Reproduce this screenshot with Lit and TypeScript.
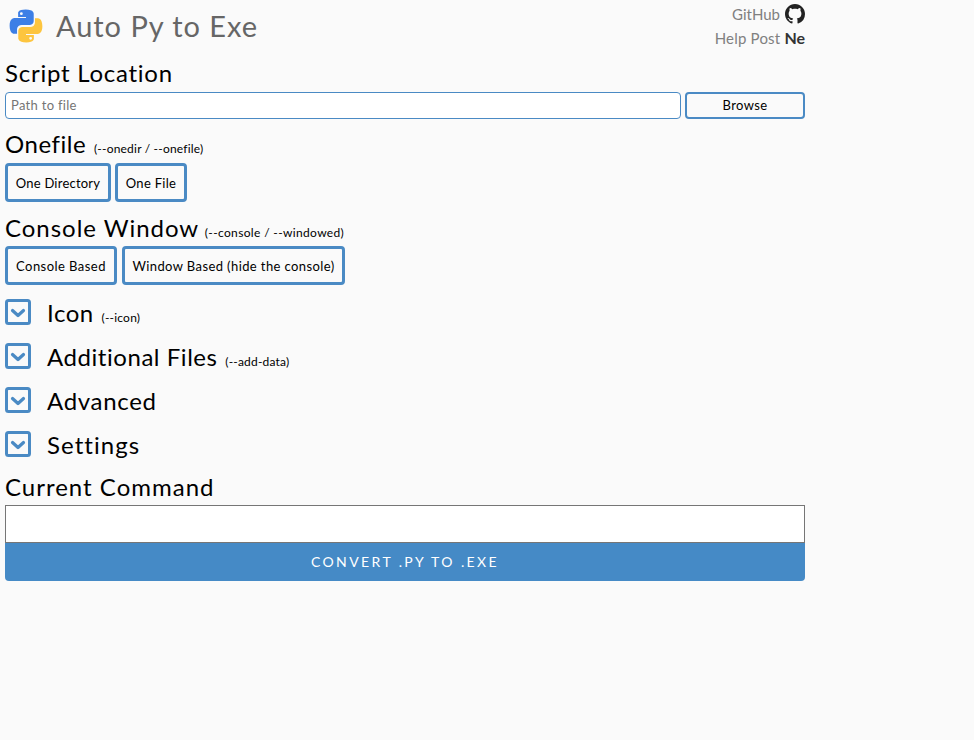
import { LitElement, html, css } from "lit";
import { customElement } from "lit/decorators.js";

const chevronBox = html`<svg class="chev" viewBox="0 0 26 26" aria-hidden="true">
  <rect x="1.500" y="1.500" width="23" height="23" rx="2" fill="none" stroke="#4a8ac4" stroke-width="3"></rect>
  <path d="M7.500 11.500 L13 16.500 L18.500 11.500" fill="none" stroke="#4a8ac4" stroke-width="3.200" stroke-linecap="round" stroke-linejoin="round"></path>
</svg>`;

@customElement("app-root")
export class AppRoot extends LitElement {
  static styles = css`
    :host {
      display: block;
      min-height: 740px;
      background: #fafafa;
      font-family: "Lato", "Open Sans", sans-serif;
      color: #000;
      box-sizing: border-box;
      padding: 0 0 0 5px;
    }
    .page { width: 800px; display: flex; flex-direction: column; }
    header { display: flex; justify-content: space-between; height: 52px; }
    .brand { display: flex; align-items: center; gap: 13px; padding: 0 0 0 4px; height: 52px; }
    .logo { width: 34px; height: 34px; }
    h1 { margin: 0; font-size: 29px; font-weight: 400; color: #666; letter-spacing: 0.95px; line-height: 52px; }
    .links { display: flex; flex-direction: column; align-items: flex-end; font-size: 15px; color: #808080; }
    .link { display: flex; align-items: center; height: 21px; gap: 4px; letter-spacing: 0.2px; }
    .link.gh { height: 27px; letter-spacing: 0; gap: 5px; }
    .gh-icon { width: 20px; height: 20px; }
    .ne { font-weight: 700; color: #333; font-size: 16px; letter-spacing: 0; }
    h2 { margin: 0; font-size: 24px; font-weight: 400; letter-spacing: 0.55px; line-height: 32px; }
    h2 small { font-size: 12px; letter-spacing: 0.2px; margin-left: 1px; line-height: 1; }
    .script { margin-top: 5px; letter-spacing: 0.75px; }
    .row { display: flex; gap: 4px; margin-top: 3px; }
    .path {
      flex: 1; height: 27px; box-sizing: border-box; border: 1px solid #4a8ac4; border-radius: 4px;
      background: #fff; padding: 0 5px 2px; font: inherit; font-size: 13px; letter-spacing: 0.3px; color: #757575; display: flex; align-items: center;
    }
    .browse {
      width: 120px; height: 27px; box-sizing: border-box; border: 2px solid #4a8ac4; border-radius: 4px;
      background: #fafafa; font: inherit; font-size: 13px; letter-spacing: 0.4px; padding: 0 0 2px; color: #000;
    }
    .section { margin-top: 8px; }
    .section + .section { margin-top: 9px; }
    .section h2.tight { line-height: 34px; }
    .choices { display: flex; gap: 4px; margin-top: 2px; }
    .choices.wide { gap: 5px; margin-top: 1px; }
    .choice {
      height: 39px; box-sizing: border-box; border: 3px solid #4a8ac4; border-radius: 4px; background: #fafafa;
      font: inherit; font-size: 13px; letter-spacing: 0.3px; padding: 0; color: #000;
    }
    .w-dir { width: 106px; letter-spacing: 0.22px; }
    .w-file { width: 72px; }
    .w-con { width: 112px; letter-spacing: 0.45px; }
    .w-win { width: 223px; letter-spacing: 0.4px; }
    .wide-title { letter-spacing: 0.97px; }
    .wide-title small { letter-spacing: 0.35px; margin-left: -1px; }
    .collapsibles { display: flex; flex-direction: column; gap: 18px; margin-top: 14px; }
    .col { display: flex; align-items: center; height: 26px; gap: 16px; }
    .chev { width: 26px; height: 26px; flex: none; }
    .col h2 { line-height: 26px; padding-top: 2px; }
    .col h2.adv { letter-spacing: 0.67px; }
    .col h2.set { letter-spacing: 1.05px; }
    .cmd-title { margin-top: 14px; line-height: 32px; letter-spacing: 1px; }
    .cmd { height: 38px; box-sizing: border-box; border: 1px solid #767676; background: #fff; margin-top: 2px; }
    .convert {
      height: 38px; border: 0; border-radius: 0 0 4px 4px; background: #458ac6; color: #fff;
      font: inherit; font-size: 14px; letter-spacing: 2.4px; padding: 0 0 2px;
    }
  `;

  render() {
    return html`<div class="page">
      <header>
        <div class="brand">
          <svg class="logo" viewBox="0 0 110 110" aria-hidden="true">
            <path fill="#3d7fe6" d="M54 2C28 2 29.500 13.500 29.500 13.500V25.500H55V29H19C19 29 2 27 2 54C2 81 17 80 17 80H26V67C26 67 25.500 52 41 52H66C66 52 80 52 80 38V16C80 16 82 2 54 2ZM40 10.500A4.600 4.600 0 1 1 40 19.700A4.600 4.600 0 0 1 40 10.500Z"></path>
            <path fill="#fdc53f" d="M56 108C82 108 80.500 96.500 80.500 96.500V84.500H55V81H91C91 81 108 83 108 56C108 29 93 30 93 30H84V43C84 43 84.500 58 69 58H44C44 58 30 58 30 72V94C30 94 28 108 56 108ZM70 99.500A4.600 4.600 0 1 1 70 90.300A4.600 4.600 0 0 1 70 99.500Z"></path>
          </svg>
          <h1>Auto Py to Exe</h1>
        </div>
        <div class="links">
          <div class="link gh">GitHub
            <svg class="gh-icon" viewBox="0 0 16 16" aria-hidden="true"><path fill="#222" d="M8 0C3.580 0 0 3.580 0 8c0 3.540 2.290 6.530 5.470 7.590.4.070.55-.17.55-.38 0-.19-.01-.82-.01-1.490-2.010.37-2.530-.49-2.690-.94-.09-.23-.48-.94-.82-1.130-.28-.15-.68-.52-.01-.53.63-.01 1.080.58 1.230.82.720 1.210 1.870.87 2.330.66.070-.52.280-.87.510-1.070-1.780-.2-3.640-.89-3.640-3.950 0-.87.310-1.590.82-2.150-.08-.2-.36-1.020.08-2.120 0 0 .67-.21 2.200.82.640-.18 1.320-.27 2-.27s1.360.09 2 .27c1.530-1.040 2.200-.82 2.200-.82.440 1.100.16 1.920.08 2.120.51.560.82 1.270.82 2.150 0 3.070-1.870 3.750-3.650 3.950.29.250.54.730.54 1.480 0 1.070-.01 1.930-.01 2.200 0 .21.150.46.550.38A8.010 8.010 0 0 0 16 8c0-4.420-3.580-8-8-8z"></path></svg>
          </div>
          <div class="link">Help Post <span class="ne">Ne</span></div>
        </div>
      </header>

      <h2 class="script">Script Location</h2>
      <div class="row">
        <div class="path">Path to file</div>
        <button class="browse">Browse</button>
      </div>

      <div class="section">
        <h2 class="tight">Onefile <small>(--onedir / --onefile)</small></h2>
        <div class="choices">
          <button class="choice w-dir">One Directory</button>
          <button class="choice w-file">One File</button>
        </div>
      </div>
      <div class="section">
        <h2 class="tight wide-title">Console Window <small>(--console / --windowed)</small></h2>
        <div class="choices wide">
          <button class="choice w-con">Console Based</button>
          <button class="choice w-win">Window Based (hide the console)</button>
        </div>
      </div>

      <div class="collapsibles">
        <div class="col">${chevronBox}<h2>Icon <small>(--icon)</small></h2></div>
        <div class="col">${chevronBox}<h2>Additional Files <small>(--add-data)</small></h2></div>
        <div class="col">${chevronBox}<h2 class="adv">Advanced</h2></div>
        <div class="col">${chevronBox}<h2 class="set">Settings</h2></div>
      </div>

      <h2 class="cmd-title">Current Command</h2>
      <div class="cmd"></div>
      <button class="convert">CONVERT .PY TO .EXE</button>
    </div>`;
  }
}
